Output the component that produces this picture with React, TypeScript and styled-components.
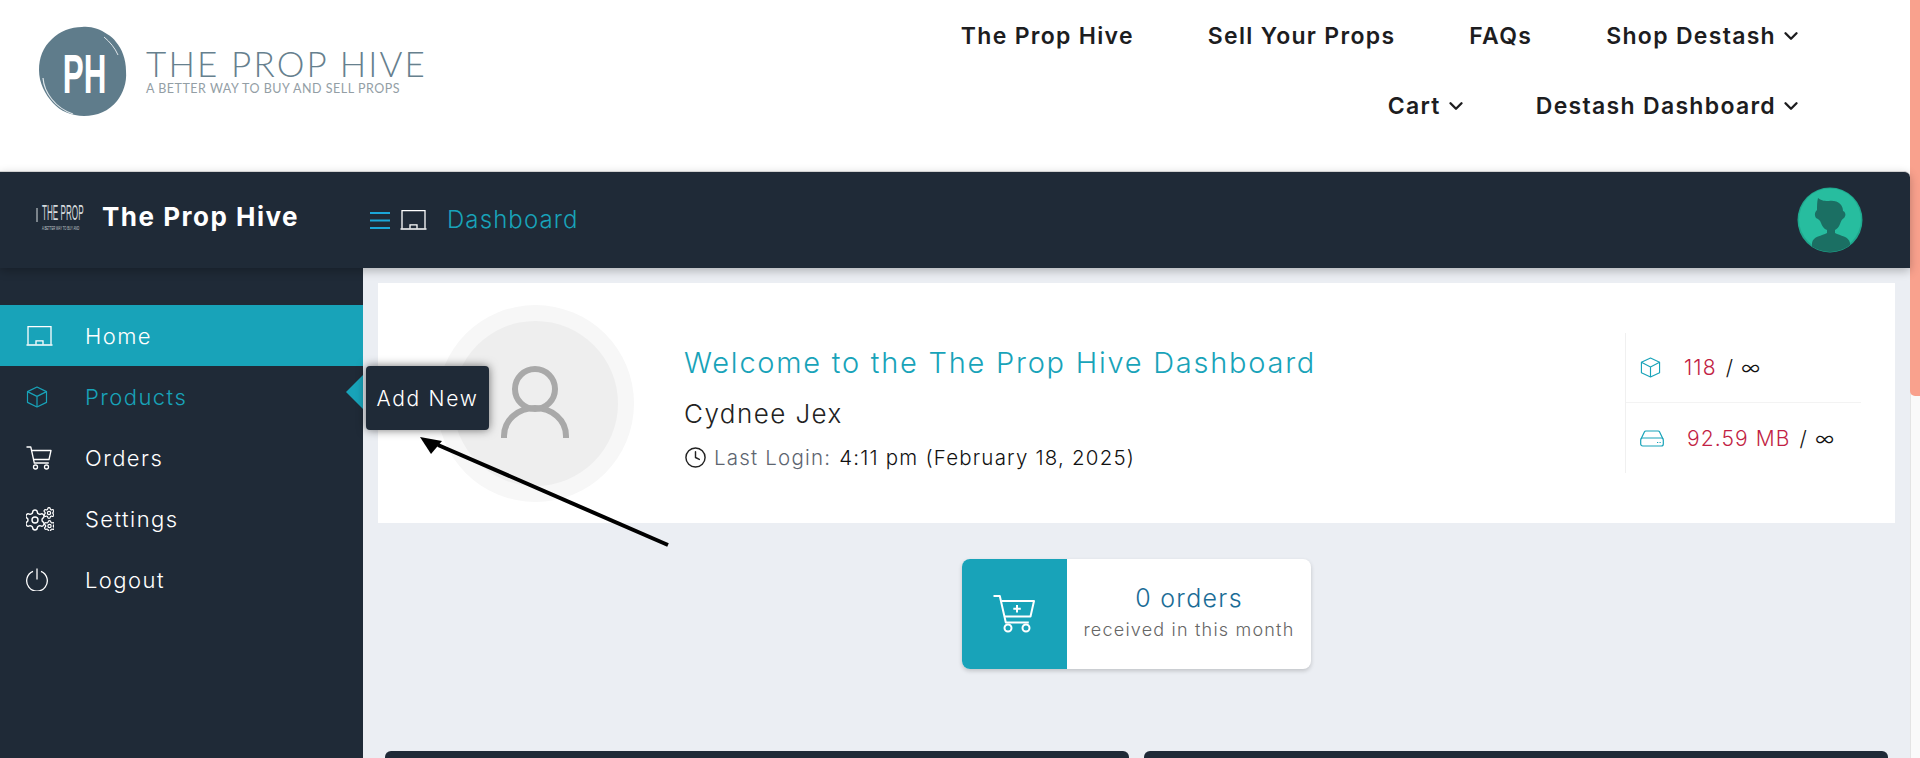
import React from 'react';
import styled, { createGlobalStyle } from 'styled-components';
import { ChevronDown, Clock, Settings } from 'lucide-react';

const TEAL = '#18a3b9';
const NAVY = '#1f2a37';

const GlobalStyle = createGlobalStyle`
  html, body {
    margin: 0;
    height: 758px;
    overflow: hidden;
    background: #ffffff;
    font-family: 'Inter', 'Liberation Sans', sans-serif;
  }
  * {
    box-sizing: border-box;
  }
`;

const BoardIcon = ({ color = '#ffffff' }: { color?: string }) => (
  <svg width="27" height="20" viewBox="0 0 27 20" fill="none" stroke={color} strokeWidth="1.3">
    <path d="M2 18.5V0.700h23v17.800" />
    <path d="M0.5 19h26" strokeWidth="1.5" />
    <path d="M10 18.5v-3.6h7v3.6" />
  </svg>
);

const CubeIcon = ({ color = TEAL, size = 22 }: { color?: string; size?: number }) => (
  <svg width={size} height={size} viewBox="0 0 22 22" fill="none" stroke={color} strokeWidth="1.2" strokeLinejoin="round">
    <path d="M11 1l9.5 4.6v10.8L11 21l-9.5-4.6V5.600z" />
    <path d="M1.500 5.600L11 10.400l9.500-4.800M11 10.400V21" />
  </svg>
);

const CartIcon = () => (
  <svg width="26" height="24" viewBox="0 0 26 24" fill="none" stroke="#ffffff" strokeWidth="1.3" strokeLinejoin="round">
    <path d="M0.500 1h4.300l3.500 16h14.500" />
    <path d="M5.500 4.500h19.500l-2 9H7.300" />
    <circle cx="9.500" cy="21" r="2" />
    <circle cx="20.500" cy="21" r="2" />
  </svg>
);

const GearsIcon = () => (
  <svg width="28" height="24" viewBox="0 0 28 24" fill="none">
    <Settings x={-3} y={1} width={24} height={24} strokeWidth={1.4} color="#ffffff" />
    <Settings x={16.500} y={-0.500} width={13} height={13} strokeWidth={2.300} color="#ffffff" />
    <Settings x={17} y={12.500} width={13} height={13} strokeWidth={2.300} color="#ffffff" />
  </svg>
);

const PowerIcon = () => (
  <svg width="22" height="23" viewBox="0 0 22 23" fill="none" stroke="#ffffff" strokeWidth="1.3">
    <path d="M7 3.300a10.300 10.300 0 1 0 8 0" />
    <path d="M11 0.500V11.500" />
  </svg>
);

const DriveIcon = () => (
  <svg width="24" height="17" viewBox="0 0 24 17" fill="none" stroke={TEAL} strokeWidth="1.2">
    <path d="M1 9l3.500-7.200A1.500 1.500 0 0 1 6 1h12a1.500 1.500 0 0 1 1.500 .8L23 9" />
    <rect x="0.700" y="8" width="22.600" height="8" rx="2" />
    <path d="M17 12.500h1.200M19.500 12.500h1.200" />
  </svg>
);

const MenuIcon = () => (
  <svg width="20" height="17" viewBox="0 0 20 17" fill="none" stroke="#1ba6d8" strokeWidth="2">
    <path d="M0 1h20M0 8.500h20M0 16h20" />
  </svg>
);

const CartPlusIcon = () => (
  <svg width="42" height="38" viewBox="0 0 42 38" fill="none" stroke="#ffffff" strokeWidth="2" strokeLinejoin="round">
    <path d="M0.500 1h6.300l6 26.500h23" />
    <path d="M8.500 6h32.500l-3.500 15.500H12" />
    <path d="M24 10v7.500M20.300 13.800h7.500" />
    <circle cx="15" cy="33" r="3.500" />
    <circle cx="33" cy="33" r="3.500" />
  </svg>
);

const LogoMark = () => (
  <svg width="92" height="92" viewBox="0 0 92 92">
    <path
      d="M46 1c9 -1 18 2 25 7c4 2 7 5 9 8c6 7 10 17 10 29c1 12 -3 22 -9 30c-8 10 -20 15 -33 15c-12 0 -24 -5 -31 -13c-8 -9 -14 -20 -14 -33c0 -12 4 -23 13 -31c8 -8 19 -12 30 -12z"
      fill="#5f7c8b"
    />
    <path d="M7 52c1 14 12 30 30 36" fill="none" stroke="#dfe6ea" strokeWidth="1.2" />
    <path d="M68 11c6 5 11 11 14 18" fill="none" stroke="#dfe6ea" strokeWidth="1" />
    <text
      transform="translate(48.500 67) scale(0.56 1)"
      textAnchor="middle"
      fontFamily="'Liberation Sans', sans-serif"
      fontWeight="700"
      fontSize="56"
      fill="#ffffff"
    >
      PH
    </text>
  </svg>
);

const SmallLogo = () => (
  <svg width="52" height="30" viewBox="0 0 52 30">
    <path d="M1 7v14" stroke="#d8dde0" strokeWidth="1" />
    <text transform="translate(6 19) scale(0.37 1)" fontFamily="'Liberation Sans', sans-serif" fontSize="22" fill="#d5dadd">
      THE PROP
    </text>
    <text transform="translate(6 28.500) scale(0.46 1)" fontFamily="'Liberation Sans', sans-serif" fontSize="6" fill="#c2c8cc">
      A BETTER WAY TO BUY AND
    </text>
  </svg>
);

const ProfileAvatar = () => (
  <svg width="66" height="66" viewBox="0 0 66 66">
    <defs>
      <clipPath id="avatar-clip">
        <circle cx="33" cy="33" r="32" />
      </clipPath>
    </defs>
    <circle cx="33" cy="33" r="32.500" fill="#1fa88e" />
    <circle cx="33" cy="32.500" r="31" fill="#27bd9f" />
    <g clipPath="url(#avatar-clip)" fill="#1b6f63">
      <path d="M21 11c4 3 7 3 11 3c9 -1 14 4 14 10c3 1 3 5 1 7c-2 1 -3 3 -4 6c-1 3 -3 5 -5 6v3c5 3 14 3 15 10v14H15V56c1 -7 10 -7 15 -10v-3c-3 -1 -5 -4 -6 -7c-1 -3 -3 -4 -5 -5c-2 -3 -1 -6 1 -8c0 -4 0 -8 1 -12z" />
    </g>
  </svg>
);

const UserOutline = () => (
  <svg width="68" height="73" viewBox="0 0 68 73" fill="none" stroke="#a9a9a9" strokeWidth="6">
    <circle cx="34" cy="24" r="20" />
    <path d="M3 73v-2c0 -16 14 -28 31 -28s31 12 31 28v2" />
  </svg>
);

const Arrow = styled.svg`
  position: absolute;
  left: 42px;
  top: 154px;
  z-index: 3;
`;

const App = styled.div`
  display: flex;
  width: 1920px;
  height: 758px;
  overflow: hidden;
`;

const Page = styled.div`
  flex: 1;
  min-width: 0;
  display: flex;
  flex-direction: column;
`;

const ScrollTrack = styled.div`
  width: 10px;
  background: #fafafa;
  border-left: 1px solid #e4e4e4;
`;

const ScrollThumb = styled.div`
  height: 396px;
  margin-left: -1px;
  background: #f9a18d;
  border-bottom-left-radius: 5px;
`;

const SiteHeader = styled.header`
  height: 171px;
  flex: none;
  display: flex;
  justify-content: space-between;
  background: #ffffff;
  padding-right: 113px;
`;

const Brand = styled.div`
  display: flex;
  align-items: flex-start;
  gap: 18px;
  padding: 26px 0 0 36px;
`;

const BrandText = styled.div`
  display: flex;
  flex-direction: column;
  padding-top: 20px;
  font-family: 'Lato', sans-serif;
`;

const BrandName = styled.div`
  font-size: 35px;
  line-height: 35px;
  font-weight: 300;
  letter-spacing: 2.150px;
  color: #66808e;
  white-space: nowrap;
`;

const BrandTag = styled.div`
  font-size: 12.500px;
  line-height: 14px;
  margin-top: 1px;
  font-weight: 400;
  letter-spacing: 0.500px;
  color: #939ea5;
  white-space: nowrap;
`;

const SiteNav = styled.nav`
  display: flex;
  flex-direction: column;
  align-items: flex-end;
  padding-top: 1px;
`;

const NavRow = styled.div`
  display: flex;
  gap: 74px;
  height: 70px;
  align-items: center;
`;

const NavLink = styled.a`
  display: flex;
  align-items: center;
  gap: 4px;
  font-size: 23px;
  font-weight: 600;
  letter-spacing: 1.300px;
  color: #1d1d1f;
  white-space: nowrap;

  svg {
    margin-right: -5px;
  }
`;

const TopBar = styled.div`
  height: 97px;
  flex: none;
  display: flex;
  align-items: center;
  position: relative;
  z-index: 2;
  background: ${NAVY};
  border-top: 1px solid #d0d0d0;
  border-top-right-radius: 6px;
  box-shadow: 0 3px 10px rgba(0, 0, 0, 0.25);
  padding: 0 47px 0 36px;
`;

const BarBrand = styled.div`
  width: 334px;
  display: flex;
  align-items: center;
  gap: 14px;
  margin-top: -8px;
`;

const BarTitle = styled.div`
  font-size: 26px;
  font-weight: 700;
  letter-spacing: 1.500px;
  color: #ffffff;
  white-space: nowrap;
`;

const BarCrumbs = styled.div`
  flex: 1;
  display: flex;
  align-items: center;
  gap: 10px;
`;

const Crumb = styled.div`
  margin: -2px 0 0 10px;
  font-size: 24px;
  font-weight: 300;
  letter-spacing: 1.100px;
  color: ${TEAL};
`;

const Body = styled.div`
  flex: 1;
  min-height: 0;
  display: flex;
`;

const Sidebar = styled.aside`
  width: 363px;
  flex: none;
  position: relative;
  z-index: 1;
  background: ${NAVY};
  padding-top: 37px;
`;

const MenuItem = styled.div<{ $active?: boolean; $current?: boolean }>`
  position: relative;
  height: 61px;
  display: flex;
  align-items: center;
  background: ${(p) => (p.$active ? TEAL : 'transparent')};
  color: ${(p) => (p.$current ? TEAL : '#ffffff')};
`;

const MenuIconBox = styled.div`
  width: 85px;
  padding-left: 26px;
  display: flex;
  align-items: center;
`;

const MenuLabel = styled.div`
  font-size: 22px;
  font-weight: 300;
  letter-spacing: 1.450px;
`;

const Pointer = styled.div`
  position: absolute;
  right: 0;
  top: 9px;
  width: 0;
  height: 0;
  border-top: 17px solid transparent;
  border-bottom: 17px solid transparent;
  border-right: 17px solid ${TEAL};
`;

const Tooltip = styled.div`
  position: absolute;
  left: 366px;
  top: 0;
  width: 123px;
  height: 64px;
  z-index: 4;
  display: flex;
  align-items: center;
  justify-content: center;
  background: ${NAVY};
  border-radius: 4px;
  box-shadow: 0 0 10px rgba(0, 0, 0, 0.55);
  font-size: 21px;
  font-weight: 300;
  letter-spacing: 1.700px;
  color: #ffffff;
`;

const Main = styled.main`
  flex: 1;
  min-width: 0;
  background: #ebeef3;
  padding: 15px 15px 0;
  overflow: hidden;
`;

const WelcomeCard = styled.section`
  position: relative;
  height: 240px;
  display: flex;
  align-items: center;
  background: #ffffff;
  padding-left: 59px;
`;

const AvatarHalo = styled.div`
  width: 197px;
  height: 197px;
  flex: none;
  display: flex;
  align-items: center;
  justify-content: center;
  border-radius: 50%;
  background: #f7f7f7;
`;

const AvatarDisc = styled.div`
  width: 165px;
  height: 165px;
  display: flex;
  align-items: center;
  justify-content: center;
  border-radius: 50%;
  background: #eeeeee;
  padding: 0 2px 3px 0;
`;

const WelcomeText = styled.div`
  margin: 10px 0 0 50px;
  flex: 1;
`;

const WelcomeTitle = styled.h1`
  margin: 0 0 16px;
  font-size: 29px;
  line-height: 36px;
  font-weight: 300;
  letter-spacing: 1.750px;
  color: ${TEAL};
`;

const UserName = styled.div`
  font-size: 26px;
  line-height: 34px;
  font-weight: 300;
  letter-spacing: 1.450px;
  color: #222;
  margin-bottom: 13px;
`;

const LastLogin = styled.div`
  display: flex;
  align-items: center;
  gap: 7px;
  font-size: 20.500px;
  line-height: 28px;
  font-weight: 300;
  letter-spacing: 1.200px;
  color: #111;
`;

const Muted = styled.span`
  color: #5d6570;
  margin-right: 8px;
`;

const QuotaPanel = styled.div`
  width: 236px;
  height: 140px;
  margin-right: 34px;
  border-left: 1px solid #f0f0f0;
`;

const QuotaRow = styled.div<{ $divided?: boolean }>`
  height: 70px;
  display: flex;
  align-items: center;
  gap: 23px;
  padding-left: 14px;
  border-bottom: ${(p) => (p.$divided ? '1px solid #f3f3f3' : 'none')};
  font-size: 21px;
  font-weight: 300;
  letter-spacing: 1.100px;
  color: #111;
  white-space: nowrap;
`;

const QuotaUsed = styled.span`
  color: #c21f45;
  margin-right: 9px;
`;

const OrdersCard = styled.section`
  width: 349px;
  height: 110px;
  margin: 36px auto 0;
  display: flex;
  background: #ffffff;
  border-radius: 8px;
  overflow: hidden;
  box-shadow: 0 2px 4px rgba(0, 0, 0, 0.18);
`;

const OrdersIcon = styled.div`
  width: 105px;
  flex: none;
  display: flex;
  align-items: center;
  justify-content: center;
  padding-right: 2px;
  background: ${TEAL};
`;

const OrdersText = styled.div`
  flex: 1;
  display: flex;
  flex-direction: column;
  align-items: center;
  justify-content: center;
  padding-bottom: 4px;
`;

const OrdersCount = styled.div`
  font-size: 25px;
  line-height: 34px;
  font-weight: 300;
  letter-spacing: 1.300px;
  color: #1a6c96;
  margin-bottom: 2px;
`;

const OrdersNote = styled.div`
  font-size: 18px;
  line-height: 26px;
  font-weight: 300;
  letter-spacing: 1.200px;
  color: #666;
  white-space: nowrap;
`;

const PanelGrid = styled.div`
  display: grid;
  grid-template-columns: 1fr 1fr;
  gap: 15px;
  margin: 82px 7px 0;
`;

const Panel = styled.div`
  height: 60px;
  background: ${NAVY};
  border-radius: 6px 6px 0 0;
`;

const menu = [
  { label: 'Home', icon: <BoardIcon />, active: true },
  { label: 'Products', icon: <CubeIcon />, current: true },
  { label: 'Orders', icon: <CartIcon /> },
  { label: 'Settings', icon: <GearsIcon /> },
  { label: 'Logout', icon: <PowerIcon /> },
];

export default function Dashboard() {
  return (
    <App>
      <GlobalStyle />
      <Page>
        <SiteHeader>
          <Brand>
            <LogoMark />
            <BrandText>
              <BrandName>THE PROP HIVE</BrandName>
              <BrandTag>A BETTER WAY TO BUY AND SELL PROPS</BrandTag>
            </BrandText>
          </Brand>
          <SiteNav>
            <NavRow>
              <NavLink>The Prop Hive</NavLink>
              <NavLink>Sell Your Props</NavLink>
              <NavLink>FAQs</NavLink>
              <NavLink>
                Shop Destash <ChevronDown size={22} strokeWidth={2.600} />
              </NavLink>
            </NavRow>
            <NavRow>
              <NavLink>
                Cart <ChevronDown size={22} strokeWidth={2.600} />
              </NavLink>
              <NavLink>
                Destash Dashboard <ChevronDown size={22} strokeWidth={2.600} />
              </NavLink>
            </NavRow>
          </SiteNav>
        </SiteHeader>

        <TopBar>
          <BarBrand>
            <SmallLogo />
            <BarTitle>The Prop Hive</BarTitle>
          </BarBrand>
          <BarCrumbs>
            <MenuIcon />
            <BoardIcon />
            <Crumb>Dashboard</Crumb>
          </BarCrumbs>
          <ProfileAvatar />
        </TopBar>

        <Body>
          <Sidebar>
            {menu.map((item) => (
              <MenuItem key={item.label} $active={item.active} $current={item.current}>
                <MenuIconBox>{item.icon}</MenuIconBox>
                <MenuLabel>{item.label}</MenuLabel>
                {item.current && (
                  <>
                    <Pointer />
                    <Tooltip>Add New</Tooltip>
                  </>
                )}
              </MenuItem>
            ))}
          </Sidebar>

          <Main>
            <WelcomeCard>
              <AvatarHalo>
                <AvatarDisc>
                  <UserOutline />
                </AvatarDisc>
              </AvatarHalo>
              <WelcomeText>
                <WelcomeTitle>Welcome to the The Prop Hive Dashboard</WelcomeTitle>
                <UserName>Cydnee Jex</UserName>
                <LastLogin>
                  <Clock size={23} strokeWidth={1.500} color="#222" />
                  <span>
                    <Muted>Last Login:</Muted>4:11 pm (February 18, 2025)
                  </span>
                </LastLogin>
              </WelcomeText>
              <QuotaPanel>
                <QuotaRow $divided>
                  <CubeIcon size={21} />
                  <span>
                    <QuotaUsed>118</QuotaUsed>/ ∞
                  </span>
                </QuotaRow>
                <QuotaRow>
                  <DriveIcon />
                  <span>
                    <QuotaUsed>92.59 MB</QuotaUsed>/ ∞
                  </span>
                </QuotaRow>
              </QuotaPanel>
              <Arrow width="252" height="112" viewBox="0 0 252 112">
                <path d="M248 108L18 8" stroke="#000000" strokeWidth="4" />
                <path d="M0 0L22 4L11 17z" fill="#000000" />
              </Arrow>
            </WelcomeCard>

            <OrdersCard>
              <OrdersIcon>
                <CartPlusIcon />
              </OrdersIcon>
              <OrdersText>
                <OrdersCount>0 orders</OrdersCount>
                <OrdersNote>received in this month</OrdersNote>
              </OrdersText>
            </OrdersCard>

            <PanelGrid>
              <Panel />
              <Panel />
            </PanelGrid>
          </Main>
        </Body>
      </Page>
      <ScrollTrack>
        <ScrollThumb />
      </ScrollTrack>
    </App>
  );
}
